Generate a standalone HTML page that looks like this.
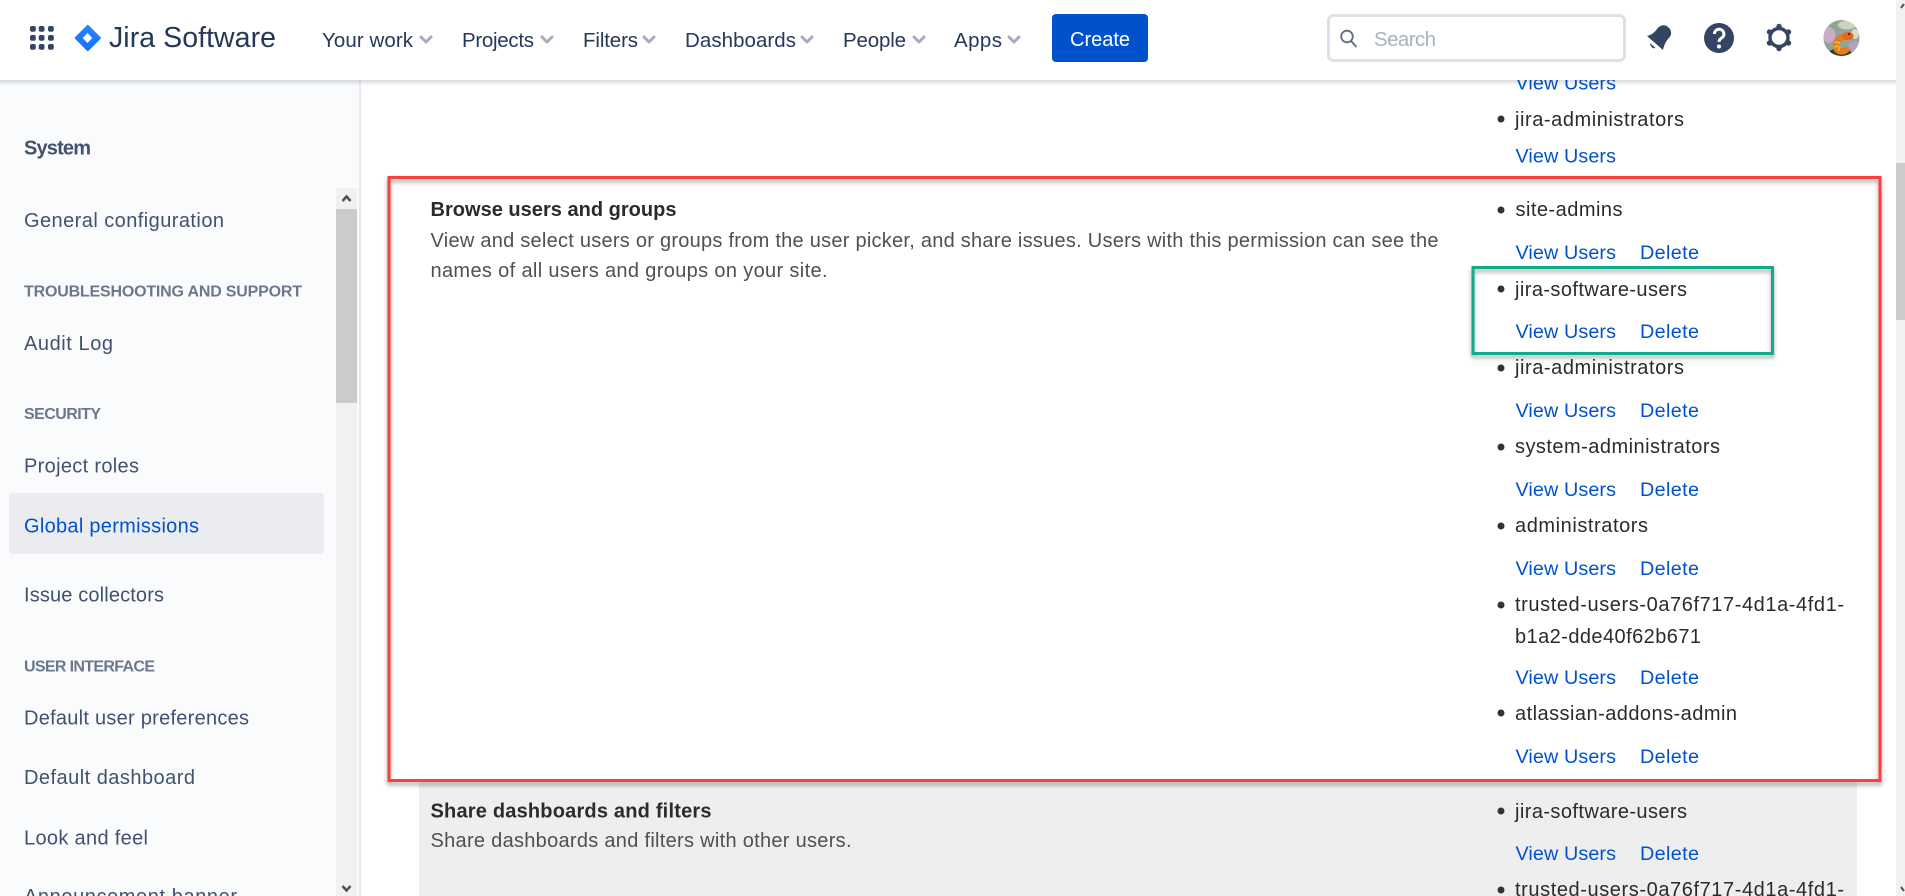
<!DOCTYPE html>
<html lang="en"><head><meta charset="utf-8"><title>Global permissions - Jira</title>
<style>
html,body{margin:0;padding:0;width:1905px;height:896px;overflow:hidden;background:#fff}
svg{display:block}
text{font-family:"Liberation Sans",sans-serif;font-size:20px;white-space:pre}
.s{fill:#42526E;font-size:20px}
.h{fill:#6B778C;font-size:16px;font-weight:700}
.n{fill:#253858;font-size:20.5px}
.t{fill:#2b2b2b}
.d{fill:#505050}
.b{fill:#2b2b2b;font-weight:700}
.l{fill:#0052CC;font-size:19.8px}
.chev{fill:none;stroke:#A5ADBA;stroke-width:3;stroke-linecap:round;stroke-linejoin:round}
</style></head><body>
<svg xmlns="http://www.w3.org/2000/svg" width="1905" height="896" viewBox="0 0 1905 896">
<defs>
<linearGradient id="hs" x1="0" y1="0" x2="0" y2="1"><stop offset="0" stop-color="#091E42" stop-opacity=".16"/><stop offset="1" stop-color="#091E42" stop-opacity="0"/></linearGradient>
<linearGradient id="lg" x1="0" y1="0" x2="0" y2="1"><stop offset="0" stop-color="#2684FF"/><stop offset="1" stop-color="#1B70EE"/></linearGradient>
<clipPath id="av"><circle cx="1841.500" cy="38" r="18"/></clipPath>
</defs>
<rect width="1905" height="896" fill="#fff"/>
<!-- sidebar -->
<rect x="0" y="80" width="359" height="816" fill="#FAFBFC"/>
<rect x="359" y="80" width="2" height="816" fill="#E9EAEE"/>
<text class="s" x="24" y="154.500" textLength="67" style="font-weight:700">System</text>
<text class="s" x="24" y="227" textLength="200">General configuration</text>
<text class="h" x="24" y="296.500" textLength="278">TROUBLESHOOTING AND SUPPORT</text>
<text class="s" x="24" y="350" textLength="89">Audit Log</text>
<text class="h" x="24" y="419" textLength="77">SECURITY</text>
<text class="s" x="24" y="472.500" textLength="115">Project roles</text>
<rect x="9" y="493" width="315" height="61" rx="4" fill="#EBECF0"/>
<text class="s" x="24" y="532.500" textLength="175" style="fill:#0052CC">Global permissions</text>
<text class="s" x="24" y="601.500" textLength="140">Issue collectors</text>
<text class="h" x="24" y="671.500" textLength="131">USER INTERFACE</text>
<text class="s" x="24" y="724.500" textLength="225">Default user preferences</text>
<text class="s" x="24" y="784" textLength="171">Default dashboard</text>
<text class="s" x="24" y="844.500" textLength="124">Look and feel</text>
<text class="s" x="24" y="903" textLength="213">Announcement banner</text>
<rect x="336" y="188" width="21" height="708" fill="#F1F1F1"/>
<rect x="336" y="209" width="21" height="194" fill="#CBCBCB"/>
<path d="M342.500 201l4-4.500 4 4.500" fill="none" stroke="#505050" stroke-width="2.500"/>
<path d="M342.500 886l4 4.500 4-4.500" fill="none" stroke="#505050" stroke-width="2.500"/>
<!-- main -->
<rect x="419" y="780" width="1438" height="116" fill="#EEEEEE"/>
<text class="l" x="1515.500" y="89.500" textLength="100.500">View Users</text>
<circle cx="1501" cy="119" r="3.500" fill="#333"/><text class="t" x="1515" y="126" textLength="169">jira-administrators</text>
<text class="l" x="1515.500" y="162.500" textLength="100.500">View Users</text>

<text class="b" x="430.500" y="216" textLength="246">Browse users and groups</text>
<text class="d" x="430.500" y="247" textLength="1008">View and select users or groups from the user picker, and share issues. Users with this permission can see the</text>
<text class="d" x="430.500" y="277" textLength="397">names of all users and groups on your site.</text>

<circle cx="1501" cy="210" r="3.500" fill="#333"/><text class="t" x="1515.500" y="216" textLength="107">site-admins</text>
<text class="l" x="1515.500" y="259" textLength="100.500">View Users</text><text class="l" x="1640" y="259" textLength="59">Delete</text>
<circle cx="1501" cy="289" r="3.500" fill="#333"/><text class="t" x="1515" y="296" textLength="172">jira-software-users</text>
<text class="l" x="1515.500" y="338" textLength="100.500">View Users</text><text class="l" x="1640" y="338" textLength="59">Delete</text>
<circle cx="1501" cy="368" r="3.500" fill="#333"/><text class="t" x="1515" y="374" textLength="169">jira-administrators</text>
<text class="l" x="1515.500" y="417" textLength="100.500">View Users</text><text class="l" x="1640" y="417" textLength="59">Delete</text>
<circle cx="1501" cy="447" r="3.500" fill="#333"/><text class="t" x="1515" y="453" textLength="205">system-administrators</text>
<text class="l" x="1515.500" y="496" textLength="100.500">View Users</text><text class="l" x="1640" y="496" textLength="59">Delete</text>
<circle cx="1501" cy="526" r="3.500" fill="#333"/><text class="t" x="1515" y="532" textLength="133">administrators</text>
<text class="l" x="1515.500" y="575" textLength="100.500">View Users</text><text class="l" x="1640" y="575" textLength="59">Delete</text>
<circle cx="1501" cy="605" r="3.500" fill="#333"/><text class="t" x="1515" y="611" textLength="329">trusted-users-0a76f717-4d1a-4fd1-</text>
<text class="t" x="1515" y="643" textLength="186">b1a2-dde40f62b671</text>
<text class="l" x="1515.500" y="684" textLength="100.500">View Users</text><text class="l" x="1640" y="684" textLength="59">Delete</text>
<circle cx="1501" cy="713" r="3.500" fill="#333"/><text class="t" x="1515" y="720" textLength="222">atlassian-addons-admin</text>
<text class="l" x="1515.500" y="763" textLength="100.500">View Users</text><text class="l" x="1640" y="763" textLength="59">Delete</text>

<text class="b" x="430.500" y="817.500" textLength="281">Share dashboards and filters</text>
<text class="d" x="430.500" y="847" textLength="421">Share dashboards and filters with other users.</text>
<circle cx="1501" cy="811" r="3.500" fill="#333"/><text class="t" x="1515" y="818" textLength="172">jira-software-users</text>
<text class="l" x="1515.500" y="860" textLength="100.500">View Users</text><text class="l" x="1640" y="860" textLength="59">Delete</text>
<circle cx="1501" cy="890" r="3.500" fill="#333"/><text class="t" x="1515" y="896" textLength="329">trusted-users-0a76f717-4d1a-4fd1-</text>

<!-- annotations -->
<rect x="389" y="177.500" width="1491" height="603" fill="none" stroke="#F9403F" stroke-width="3" style="filter:drop-shadow(0 3px 2px rgba(0,0,0,.38))"/>
<rect x="1473" y="267.500" width="299.500" height="86" fill="none" stroke="#0FAB8C" stroke-width="3" style="filter:drop-shadow(0 3px 2px rgba(0,0,0,.35))"/>

<!-- page scrollbar -->
<rect x="1896" y="0" width="9" height="896" fill="#F1F1F1"/>
<rect x="1896" y="163" width="9" height="157" fill="#CBCBCB"/>
<path d="M1901 8l3-4" fill="none" stroke="#505050" stroke-width="2"/>
<path d="M1901 887l3 4" fill="none" stroke="#505050" stroke-width="2"/>

<!-- header -->
<rect x="0" y="80" width="1896" height="6" fill="url(#hs)"/>
<rect x="0" y="0" width="1896" height="80" fill="#fff"/>
<g fill="#344563">
<rect x="30" y="26" width="5.800" height="5.800" rx="2"/><rect x="38.700" y="26" width="5.800" height="5.800" rx="2"/><rect x="48" y="26" width="5.800" height="5.800" rx="2"/>
<rect x="30" y="35" width="5.800" height="5.800" rx="2"/><rect x="38.700" y="35" width="5.800" height="5.800" rx="2"/><rect x="48" y="35" width="5.800" height="5.800" rx="2"/>
<rect x="30" y="44" width="5.800" height="5.800" rx="2"/><rect x="38.700" y="44" width="5.800" height="5.800" rx="2"/><rect x="48" y="44" width="5.800" height="5.800" rx="2"/>
</g>
<path d="M87.800 26.500l11.500 11.500-11.500 11.500-11.500-11.500z" fill="url(#lg)" stroke="url(#lg)" stroke-width="3" stroke-linejoin="round"/>
<path d="M87.500 33.500l4.300 4.500-4.300 4.500-4.300-4.500z" fill="#fff" stroke="#fff" stroke-width=".6" stroke-linejoin="round"/>
<text x="109" y="47" textLength="167" style="font-size:28.500px;fill:#253858">Jira Software</text>

<text class="n" x="322" y="47" textLength="91">Your work</text><path class="chev" d="M421 37l5 5 5-5"/>
<text class="n" x="462" y="47" textLength="72">Projects</text><path class="chev" d="M542 37l5 5 5-5"/>
<text class="n" x="583" y="47" textLength="55">Filters</text><path class="chev" d="M644 37l5 5 5-5"/>
<text class="n" x="685" y="47" textLength="111">Dashboards</text><path class="chev" d="M802 37l5 5 5-5"/>
<text class="n" x="843" y="47" textLength="63">People</text><path class="chev" d="M914 37l5 5 5-5"/>
<text class="n" x="954" y="47" textLength="48">Apps</text><path class="chev" d="M1009 37l5 5 5-5"/>

<rect x="1052" y="14" width="96" height="48" rx="4" fill="#0052CC"/>
<text x="1070" y="46" textLength="60" style="font-size:20px;fill:#fff">Create</text>

<rect x="1328.500" y="15.500" width="296" height="45" rx="5" fill="#fff" stroke="#DFE1E6" stroke-width="3"/>
<circle cx="1347" cy="36.500" r="5.800" fill="none" stroke="#5E6C84" stroke-width="1.800"/><path d="M1351 41l5 5.500" stroke="#5E6C84" stroke-width="1.800" stroke-linecap="round"/>
<text x="1374" y="46" textLength="62" style="font-size:20.500px;fill:#A9B1BE">Search</text>

<!-- bell -->
<g fill="#344563">
<path d="M1647 36C1652 35 1655 32 1657 29 1660 25 1665 24 1668 27 1672 30 1672 35 1669 38 1666 41 1664 45 1663 50Z"/>
<path d="M1650 43L1655.500 48C1653.500 49 1650.500 47.500 1650 43Z"/>
</g>
<!-- help -->
<circle cx="1719" cy="38" r="15" fill="#344563"/>
<path d="M1714.500 34a4.700 4.700 0 1 1 7.200 3.900c-1.700 1.100-2.700 2-2.700 4" fill="none" stroke="#fff" stroke-width="3"/>
<circle cx="1719" cy="46.500" r="2" fill="#fff"/>
<!-- gear -->
<g fill="#344563">
<circle cx="1779" cy="37.500" r="9" fill="none" stroke="#344563" stroke-width="3.400"/>
<circle cx="1779" cy="26.500" r="2.700"/><circle cx="1779" cy="48.500" r="2.700"/>
<circle cx="1769.500" cy="32" r="2.700"/><circle cx="1788.500" cy="32" r="2.700"/>
<circle cx="1769.500" cy="43" r="2.700"/><circle cx="1788.500" cy="43" r="2.700"/>
</g>
<!-- avatar -->
<g clip-path="url(#av)">
<rect x="1823" y="20" width="37" height="36" fill="#8FA598"/>
<ellipse cx="1847" cy="25" rx="9" ry="4.500" fill="#CBD3BD"/>
<ellipse cx="1855" cy="34" rx="4" ry="5" fill="#D9DDC8"/>
<ellipse cx="1829" cy="35" rx="6.500" ry="8" fill="#CDA9C9"/>
<ellipse cx="1855" cy="46" rx="6" ry="5" fill="#B9A0BC"/>
<ellipse cx="1840" cy="55" rx="12" ry="7" fill="#23452E"/>
<path d="M1847 37c-6-1-11 3-11 9 0 5 5 7 10 4" fill="none" stroke="#EA7A1C" stroke-width="6.500" stroke-linecap="round"/>
<path d="M1835 42l5 1M1834 47l5-1M1838 51l2-4" stroke="#F3C23A" stroke-width="1.500" fill="none"/>
<ellipse cx="1848" cy="36" rx="5.500" ry="4" fill="#E8641A"/>
<circle cx="1849" cy="34" r="1" fill="#222"/>
</g>
</svg>
</body></html>
